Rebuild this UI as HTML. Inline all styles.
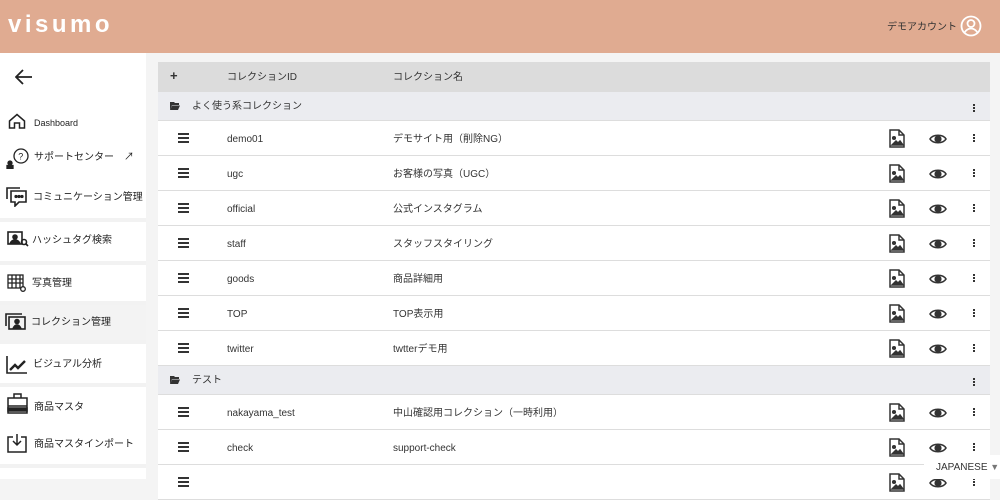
<!DOCTYPE html>
<html><head><meta charset="utf-8"><style>
*{margin:0;padding:0;box-sizing:border-box}
body{width:1000px;height:479px;overflow:hidden;background:#f4f4f4;font-family:"Liberation Sans","Noto Sans CJK JP",sans-serif;color:#333;position:relative;line-height:12px}
span{line-height:12px}
.hd{position:absolute;left:0;top:0;width:1000px;height:53px;background:#e0ab91}
.logo{position:absolute;left:8px;top:11px;font-size:24px;line-height:28px;font-weight:bold;color:#fff;letter-spacing:3.5px}
.acct{position:absolute;left:887px;top:22px;font-size:10px;color:#333}
.sb{position:absolute;left:0;top:53px;width:146px;height:426px;background:#fff}
.si{position:absolute;left:0;width:146px;font-size:10px;color:#222}
.si span{position:absolute;top:0}
.sep{position:absolute;left:0;width:146px;height:4px;background:#f2f2f2}
.tb{position:absolute;left:158px;top:62px;width:832px}
.r{position:relative;height:35px;background:#fff;border-bottom:1px solid #ddd;font-size:10px}
.r .ham{position:absolute;left:20px;top:12px;width:11px}
.ham i{display:block;height:1.6px;background:#333;margin-bottom:2.6px}
.r .id{position:absolute;left:69px;top:13px}
.r .nm{position:absolute;left:235px;top:13px}
.g{position:relative;height:29px;background:#ebecf0;border-bottom:1px solid #ddd;font-size:10px}
.h{position:relative;height:30px;background:#dcdcdc;font-size:10px}
.dots{position:absolute;left:815px;width:3px}
.dots i{display:block;width:2px;height:2px;background:#333;margin-bottom:1px}
.fi{position:absolute;left:731px;top:8px}
.ey{position:absolute;left:771px;top:12px}
</style></head><body>
<div class="hd"><div class="logo">visumo</div><div class="acct">デモアカウント</div>
<svg style="position:absolute;left:960px;top:15px" width="22" height="22" viewBox="0 0 22 22" fill="none" stroke="#fff" stroke-width="1.8"><circle cx="11" cy="11" r="9.5"/><circle cx="11" cy="8.5" r="3.5"/><path d="M4.5 17.5c2-3 4-4 6.5-4s4.5 1 6.5 4"/></svg></div>
<div class="sb">
<svg style="position:absolute;left:15px;top:16px" width="18" height="16" viewBox="0 0 18 16" fill="none" stroke="#222" stroke-width="1.8"><path d="M17 8H2M8 1L1 8l7 7"/></svg>
<div class="si" style="top:60px"><svg style="position:absolute;left:8px;top:0" width="18" height="16" fill="none" stroke="#222" stroke-width="1.5"><path d="M1.5 8L9 1.5 16.5 8v7h-5v-5h-5v5h-5z"/></svg><span style="left:34px;top:4px;font-size:9px">Dashboard</span></div>
<div class="si" style="top:94px"><svg style="position:absolute;left:6px;top:0" width="24" height="22" fill="none" stroke="#222" stroke-width="1.3"><circle cx="15" cy="9" r="7"/><text x="12.3" y="12.5" font-size="9" fill="#222" stroke="none">?</text><circle cx="4" cy="16" r="2" fill="#222"/><rect x="1" y="18.5" width="6" height="3" fill="#222"/></svg><span style="left:34px;top:5px">サポートセンター　↗</span></div>
<div class="si" style="top:134px"><svg style="position:absolute;left:6px;top:0" width="22" height="20" fill="none" stroke="#222" stroke-width="1.6"><path d="M1 12V1h13"/><path d="M5 4h15v11h-7l-4 4v-4H5z"/><circle cx="10" cy="9.5" r=".8" fill="#222"/><circle cx="13" cy="9.5" r=".8" fill="#222"/><circle cx="16" cy="9.5" r=".8" fill="#222"/></svg><span style="left:33px;top:5px">コミュニケーション管理</span></div>
<div class="sep" style="top:165px"></div>
<div class="si" style="top:178px"><svg style="position:absolute;left:7px;top:0" width="22" height="16" fill="none" stroke="#222" stroke-width="1.6"><rect x="1" y="1" width="14" height="12"/><circle cx="8" cy="6" r="2" fill="#222"/><path d="M3 13c1-3 3-4 5-4s4 1 5 4" fill="#222"/><circle cx="17" cy="11" r="2.5"/><path d="M19 13l2 2"/></svg><span style="left:32px;top:4px">ハッシュタグ検索</span></div>
<div class="sep" style="top:208px"></div>
<div class="si" style="top:221px"><svg style="position:absolute;left:7px;top:0" width="20" height="18" fill="none" stroke="#222" stroke-width="1.3"><rect x="1" y="1" width="15" height="13"/><path d="M1 5h15M1 9h15M5 1v13M9 1v13M13 1v13"/><circle cx="16" cy="15" r="2.3" fill="#fff"/></svg><span style="left:32px;top:4px">写真管理</span></div>
<div class="sep" style="top:248px"></div>
<div style="position:absolute;left:0;top:252px;width:146px;height:35px;background:#f3f3f3"></div>
<div class="si" style="top:260px"><svg style="position:absolute;left:5px;top:0" width="22" height="17" fill="none" stroke="#222" stroke-width="1.6"><path d="M1 13V1h16"/><rect x="4" y="4" width="16" height="12"/><circle cx="12" cy="8.5" r="2" fill="#222"/><path d="M8 16c1-3 2-4 4-4s3 1 4 4" fill="#222"/></svg><span style="left:31px;top:4px">コレクション管理</span></div>
<div class="sep" style="top:287px"></div>
<div class="si" style="top:302px"><svg style="position:absolute;left:6px;top:0" width="22" height="20" fill="none" stroke="#222" stroke-width="1.6"><path d="M1 1v17h20"/><path d="M4 15l5-5 3 3 7-7" stroke-width="2.4"/></svg><span style="left:33px;top:4px">ビジュアル分析</span></div>
<div class="sep" style="top:330px"></div>
<div class="si" style="top:340px"><svg style="position:absolute;left:7px;top:0" width="22" height="22" fill="none" stroke="#222" stroke-width="1.5"><path d="M7 5V1h7v4"/><rect x="1" y="5" width="19" height="15"/><path d="M1 13h19" /><rect x="1" y="15" width="19" height="3" fill="#222"/></svg><span style="left:34px;top:9px">商品マスタ</span></div>
<div class="si" style="top:380px"><svg style="position:absolute;left:7px;top:0" width="20" height="20" fill="none" stroke="#222" stroke-width="1.5"><path d="M6 4H1v15h18V4h-5M10 1v11M6 8l4 4 4-4"/></svg><span style="left:34px;top:6px">商品マスタインポート</span></div>
<div class="sep" style="top:411px"></div>
</div>
<div class="tb">
<div class="h"><span style="position:absolute;left:12px;top:8px;font-size:13px;font-weight:bold">+</span><span style="position:absolute;left:69px;top:10px">コレクションID</span><span style="position:absolute;left:235px;top:10px">コレクション名</span></div>
<div class="g"><svg style="position:absolute;left:12px;top:10px" width="10" height="8" viewBox="0 0 10 8"><path d="M0 0h4l1 1h4v2H2L0 8z" fill="#333"/><path d="M2 3.5h8L8 8H0z" fill="#333"/></svg><span style="position:absolute;left:34px;top:9px">よく使う系コレクション</span><div class="dots" style="top:12px"><i></i><i></i><i></i></div></div>
<div id="rows1"></div>
</div>
<div style="position:absolute;left:924px;top:455px;width:76px;height:24px;background:#fff;font-size:10px;padding:6px 0 0 12px">JAPANESE <span style="color:#777;font-size:9px">▼</span></div>
<script>
var icons='<svg class="fi" width="16" height="19" viewBox="0 0 16 19" fill="none" stroke="#333" stroke-width="1.5"><path d="M1 1h9l5 5v12H1z"/><path d="M10 1v5h5"/><circle cx="5" cy="9" r="1.3" fill="#333"/><path d="M3 16l4-4 2 2 2-2 3 4z" fill="#333"/></svg><svg class="ey" width="18" height="12" viewBox="0 0 18 12"><path d="M1 6C4 1 14 1 17 6C14 11 4 11 1 6z" fill="none" stroke="#333" stroke-width="1.6"/><circle cx="9" cy="6" r="3.6" fill="#333"/></svg><div class="dots" style="top:13px"><i></i><i></i><i></i></div>';
function row(id,nm){return '<div class="r"><div class="ham"><i></i><i></i><i></i></div><span class="id">'+id+'</span><span class="nm">'+nm+'</span>'+icons+'</div>';}
var h='';
[['demo01','デモサイト用（削除NG）'],['ugc','お客様の写真（UGC）'],['official','公式インスタグラム'],['staff','スタッフスタイリング'],['goods','商品詳細用'],['TOP','TOP表示用'],['twitter','twtterデモ用']].forEach(function(a){h+=row(a[0],a[1]);});
h+='<div class="g"><svg style="position:absolute;left:12px;top:10px" width="10" height="8" viewBox="0 0 10 8"><path d="M0 0h4l1 1h4v2H2L0 8z" fill="#333"/><path d="M2 3.5h8L8 8H0z" fill="#333"/></svg><span style="position:absolute;left:34px;top:9px">テスト</span><div class="dots" style="top:12px"><i></i><i></i><i></i></div></div>';
h+=row('nakayama_test','中山確認用コレクション（一時利用）')+row('check','support-check')+row('','');
document.getElementById('rows1').outerHTML=h;
</script>
</body></html>
